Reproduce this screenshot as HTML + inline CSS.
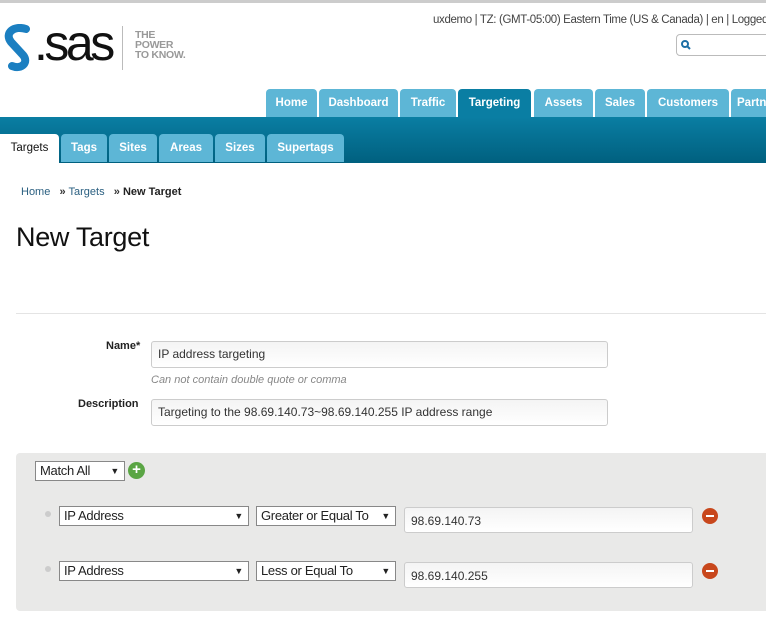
<!DOCTYPE html>
<html><head><meta charset="utf-8"><style>
*{box-sizing:border-box;margin:0;padding:0}
body{width:766px;height:643px;overflow:hidden;background:#fff;font-family:"Liberation Sans",Arial,sans-serif;position:relative}
.a{position:absolute}
.tab{position:absolute;background:#5db6d6;color:#fff;font-weight:bold;font-size:11.5px;text-align:center;border-radius:4px 4px 0 0;line-height:28px;height:28px}
.sel{border:1px solid #888;background:#fff;font-size:13px;color:#222;height:20px;line-height:18px;padding-left:4px;letter-spacing:-0.3px}
.sel:after{content:"▼";position:absolute;right:5px;top:0;font-size:9px}
.inp{border:1px solid #ccc;border-radius:3px;background:linear-gradient(#f4f4f4,#fff);font-size:12px;color:#333;padding-left:6px}
</style></head><body>
<div class="a" style="left:0;top:0;width:766px;height:3px;background:#ccc"></div>
<svg class="a" style="left:2px;top:24px" width="36" height="48" viewBox="0 0 36 48"><path d="M24 5 C12 1 2 9 9 18 L21 31 C27 38 20 46 10 42" fill="none" stroke="#1b7fc1" stroke-width="8" stroke-linecap="round"/></svg>
<div class="a" style="left:34px;top:14px;font-size:50px;letter-spacing:-3.5px;color:#111;font-family:'Liberation Sans',sans-serif">.sas</div>
<div class="a" style="left:122px;top:26px;width:1px;height:44px;background:#bbb"></div>
<div class="a" style="left:135px;top:30px;font-size:10.5px;line-height:10px;font-weight:bold;color:#999;letter-spacing:-0.3px">THE<br>POWER<br>TO KNOW.</div>
<div class="a" style="left:433px;top:14px;font-size:11.5px;color:#444;white-space:nowrap;letter-spacing:-0.35px">uxdemo | TZ: (GMT-05:00) Eastern Time (US &amp; Canada) | en | Logged</div>
<div class="a" style="left:676px;top:34px;width:100px;height:22px;border:1px solid #bbb;border-radius:4px"></div>
<svg class="a" style="left:680px;top:39px" width="12" height="12"><circle cx="5" cy="5" r="3" fill="none" stroke="#1d6fa5" stroke-width="2"/><path d="M7 7 L10 10" stroke="#1d6fa5" stroke-width="2"/></svg>
<div class="a" style="left:0;top:117px;width:766px;height:46px;background:linear-gradient(#0a7ea3,#00607f)"></div>
<div class="tab" style="left:266px;top:89px;width:51px">Home</div>
<div class="tab" style="left:319px;top:89px;width:79px">Dashboard</div>
<div class="tab" style="left:400px;top:89px;width:56px">Traffic</div>
<div class="tab" style="left:458px;top:89px;width:73px;height:29px;background:#0a7ea3">Targeting</div>
<div class="tab" style="left:534px;top:89px;width:59px">Assets</div>
<div class="tab" style="left:595px;top:89px;width:50px">Sales</div>
<div class="tab" style="left:647px;top:89px;width:82px">Customers</div>
<div class="tab" style="left:731px;top:89px;width:50px;text-align:left;padding-left:6px">Partners</div>
<div class="tab" style="left:0;top:134px;width:59px;height:29px;background:#fff;color:#111;border-radius:0 4px 0 0;font-weight:normal">Targets</div>
<div class="tab" style="left:61px;top:134px;width:46px">Tags</div>
<div class="tab" style="left:109px;top:134px;width:48px">Sites</div>
<div class="tab" style="left:159px;top:134px;width:54px">Areas</div>
<div class="tab" style="left:215px;top:134px;width:50px">Sizes</div>
<div class="tab" style="left:267px;top:134px;width:77px">Supertags</div>
<div class="a" style="left:21px;top:186px;font-size:11px;color:#2a5f80;white-space:nowrap">Home &nbsp;&nbsp;<b style="color:#333">»</b> Targets &nbsp;&nbsp;<b style="color:#333">»</b> <b style="color:#222">New Target</b></div>
<div class="a" style="left:16px;top:222px;font-size:27px;color:#111;letter-spacing:-0.3px">New Target</div>
<div class="a" style="left:16px;top:313px;width:750px;height:1px;background:#e4e4e4"></div>
<div class="a" style="left:106px;top:340px;font-size:11px;font-weight:bold;color:#222">Name*</div>
<div class="a inp" style="left:151px;top:341px;width:457px;height:27px;line-height:25px">IP address targeting</div>
<div class="a" style="left:151px;top:374px;font-size:11px;font-style:italic;color:#888">Can not contain double quote or comma</div>
<div class="a" style="left:78px;top:398px;font-size:11px;font-weight:bold;color:#222">Description</div>
<div class="a inp" style="left:151px;top:399px;width:457px;height:27px;line-height:25px">Targeting to the 98.69.140.73~98.69.140.255 IP address range</div>
<div class="a" style="left:16px;top:453px;width:760px;height:158px;background:#e9e9e8;border-radius:4px"></div>
<div class="a sel" style="left:35px;top:461px;width:90px">Match All</div>
<div class="a" style="left:128px;top:462px;width:17px;height:17px;border-radius:50%;background:#5aa544;color:#fff;font-weight:bold;font-size:15px;line-height:16px;text-align:center">+</div>
<div class="a" style="left:45px;top:511px;width:6px;height:6px;border-radius:50%;background:#ccc"></div>
<div class="a sel" style="left:59px;top:506px;width:190px">IP Address</div>
<div class="a sel" style="left:256px;top:506px;width:140px">Greater or Equal To</div>
<div class="a inp" style="left:404px;top:507px;width:289px;height:26px;line-height:26px">98.69.140.73</div>
<div class="a" style="left:702px;top:508px;width:16px;height:16px;border-radius:50%;background:#c8471c"><div style="margin:7px 4px;height:2px;background:#fff"></div></div>
<div class="a" style="left:45px;top:566px;width:6px;height:6px;border-radius:50%;background:#ccc"></div>
<div class="a sel" style="left:59px;top:561px;width:190px">IP Address</div>
<div class="a sel" style="left:256px;top:561px;width:140px">Less or Equal To</div>
<div class="a inp" style="left:404px;top:562px;width:289px;height:26px;line-height:26px">98.69.140.255</div>
<div class="a" style="left:702px;top:563px;width:16px;height:16px;border-radius:50%;background:#c8471c"><div style="margin:7px 4px;height:2px;background:#fff"></div></div>
</body></html>
